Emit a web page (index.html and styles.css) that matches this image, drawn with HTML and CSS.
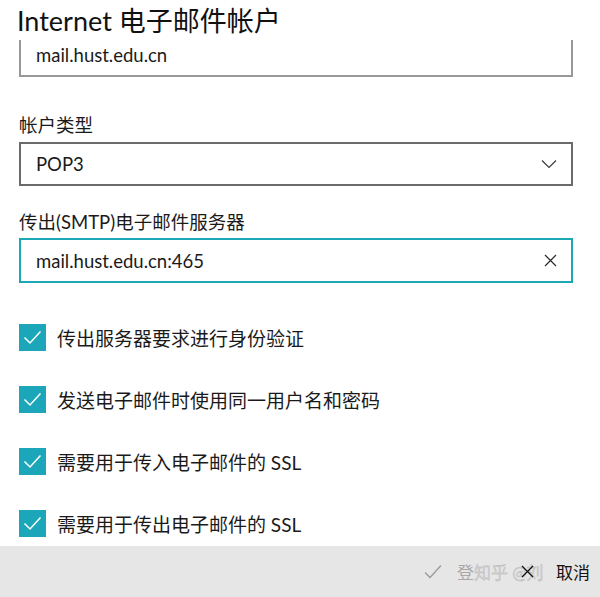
FILE: index.html
```html
<!DOCTYPE html>
<html lang="zh-CN">
<head>
<meta charset="utf-8">
<title>Internet 电子邮件帐户</title>
<link rel="stylesheet" href="styles.css">
</head>
<body>
<div class="window">
  <header class="titlebar">
    <h1 class="title">Internet 电子邮件帐户</h1>
  </header>
  <main class="viewport">
    <div class="content">
      <div class="field">
        <div class="box box-plain"><span class="value">mail.hust.edu.cn</span></div>
      </div>
      <div class="field field-labeled">
        <div class="label">帐户类型</div>
        <div class="box box-select">
          <span class="value">POP3</span>
          <svg class="chev" width="16" height="10" viewBox="0 0 16 10"><path d="M1 1.5 L8 8.5 L15 1.5" fill="none" stroke="#3a3a3a" stroke-width="1.2"/></svg>
        </div>
      </div>
      <div class="field field-labeled2">
        <div class="label">传出(SMTP)电子邮件服务器</div>
        <div class="box box-focus">
          <span class="value">mail.hust.edu.cn:465</span>
          <svg class="clear" width="13" height="13" viewBox="0 0 13 13"><path d="M1 1 L12 12 M12 1 L1 12" fill="none" stroke="#2a2a2a" stroke-width="1.2"/></svg>
        </div>
      </div>
      <ul class="checks">
        <li class="check"><span class="tick"><svg width="27" height="27" viewBox="0 0 27 27"><path d="M5.5 13.5 L11 19 L21.5 7.5" fill="none" stroke="#fff" stroke-width="1.5"/></svg></span><span class="check-text">传出服务器要求进行身份验证</span></li>
        <li class="check"><span class="tick"><svg width="27" height="27" viewBox="0 0 27 27"><path d="M5.5 13.5 L11 19 L21.5 7.5" fill="none" stroke="#fff" stroke-width="1.5"/></svg></span><span class="check-text">发送电子邮件时使用同一用户名和密码</span></li>
        <li class="check"><span class="tick"><svg width="27" height="27" viewBox="0 0 27 27"><path d="M5.5 13.5 L11 19 L21.5 7.5" fill="none" stroke="#fff" stroke-width="1.5"/></svg></span><span class="check-text">需要用于传入电子邮件的 SSL</span></li>
        <li class="check"><span class="tick"><svg width="27" height="27" viewBox="0 0 27 27"><path d="M5.5 13.5 L11 19 L21.5 7.5" fill="none" stroke="#fff" stroke-width="1.5"/></svg></span><span class="check-text">需要用于传出电子邮件的 SSL</span></li>
      </ul>
    </div>
  </main>
  <footer class="commandbar">
    <span class="watermark">知乎 @刘</span>
    <div class="cmd cmd-disabled">
      <svg width="18" height="16" viewBox="0 0 18 16"><path d="M1 8.5 L6 13.5 L17 1.5" fill="none" stroke="#9a9a9a" stroke-width="1.3"/></svg>
      <span class="cmd-text">登</span>
    </div>
    <div class="cmd cmd-cancel">
      <svg width="13" height="13" viewBox="0 0 13 13"><path d="M1 1 L12 12 M12 1 L1 12" fill="none" stroke="#111" stroke-width="1.3"/></svg>
      <span class="cmd-text">取消</span>
    </div>
  </footer>
</div>
</body>
</html>
```
FILE: styles.css
```css
* { box-sizing: border-box; }
html, body { margin: 0; padding: 0; background: #fff; }
body {
  font-family: "Lato", "Noto Sans CJK SC", sans-serif;
  color: #1a1a1a;
}
.window {
  width: 600px;
  height: 597px;
  display: flex;
  flex-direction: column;
  overflow: hidden;
}
.titlebar {
  height: 40px;
  flex: none;
  padding-left: 17px;
  background: #fff;
  position: relative;
  z-index: 1;
}
.title {
  margin: 0;
  font-weight: 400;
  font-size: 27px;
  line-height: 40px;
  margin-top: 1px;
  color: #111;
}
.viewport {
  flex: 1;
  overflow: hidden;
}
.content {
  margin-top: -7px;
  padding-left: 19px;
  width: 573px;
}
.box {
  height: 44px;
  border: 2px solid #999;
  display: flex;
  align-items: center;
  padding: 0 14px 0 15px;
  justify-content: space-between;
}
.box-select { border-color: #6a6a6a; }
.box-focus { border-color: #1ba7b3; height: 45px; }
.value {
  font-size: 18.5px;
  color: #1a1a1a;
}
.label {
  font-size: 18.5px;
  line-height: 24px;
  color: #1a1a1a;
}
.field-labeled { margin-top: 36px; }
.field-labeled .label { margin-bottom: 5px; }
.field-labeled2 { margin-top: 24px; }
.field-labeled2 .label { margin-bottom: 4px; }
.checks {
  list-style: none;
  margin: 41px 0 0;
  padding: 0;
  display: flex;
  flex-direction: column;
  gap: 35px;
}
.check {
  display: flex;
  align-items: center;
  height: 27px;
}
.tick {
  width: 27px;
  height: 27px;
  background: #1ba7b9;
  display: block;
  flex: none;
}
.tick svg { display: block; }
.check-text {
  margin-left: 11px;
  font-size: 19px;
  color: #1a1a1a;
}
.commandbar {
  height: 51px;
  flex: none;
  background: #e6e6e6;
  display: flex;
  align-items: center;
  justify-content: flex-end;
  padding-right: 10px;
  position: relative;
}
.cmd {
  display: flex;
  align-items: center;
  position: relative;
  z-index: 1;
}
.cmd-disabled { gap: 15px; margin-right: 47px; }
.cmd-disabled .cmd-text { color: #a8a8a8; }
.cmd-cancel { gap: 22px; }
.cmd-text { font-size: 17px; color: #111; }
.watermark {
  position: absolute;
  left: 474px;
  top: 13px;
  font-size: 17px;
  color: #cfcfcf;
  -webkit-text-stroke: 0.3px #b5b5b5;
}
```
